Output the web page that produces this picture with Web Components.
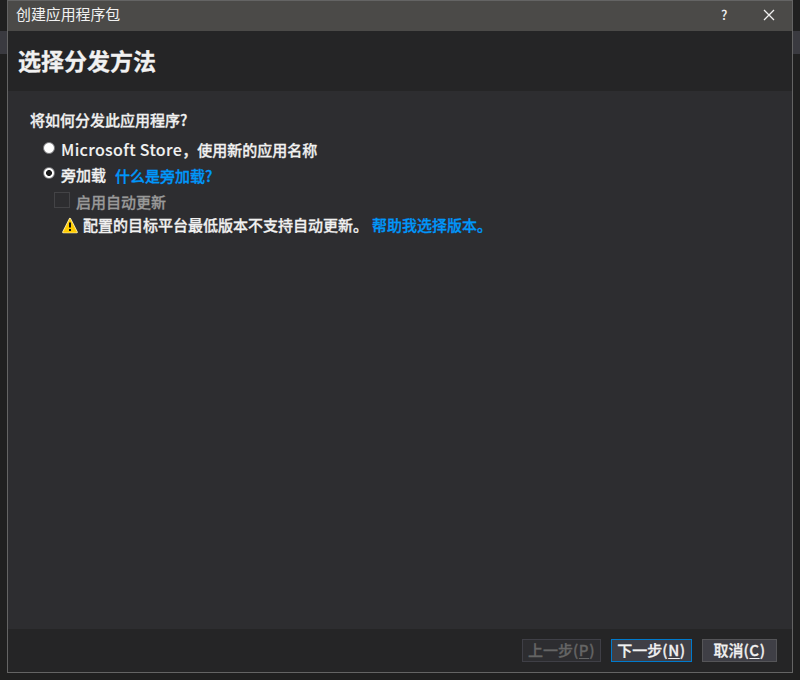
<!DOCTYPE html>
<html lang="zh-CN">
<head>
<meta charset="utf-8">
<title>创建应用程序包</title>
<style>
html, body{
    margin: 0;
    height: 100%;
}
body{
    box-sizing: border-box;
    height: 680px;
    overflow: hidden;
    padding: 0 7px 7px;
    background: linear-gradient(#202020 0 31px, #3a3a40 31px 54px, #202020 54px);
    color: #f1f1f1;
    font: 500 15px/22px "Noto Sans CJK SC", sans-serif;
    -webkit-text-stroke: .3px;
}
</style>
</head>
<body>
<package-dialog>
    <title-bar slot="title">创建应用程序包</title-bar>
    <span slot="heading">选择分发方法</span>
    <distribution-form></distribution-form>
    <dialog-button slot="actions" key="P" disabled style="width:79px">上一步</dialog-button>
    <dialog-button slot="actions" key="N" primary style="width:81px">下一步</dialog-button>
    <dialog-button slot="actions" key="C" style="width:75px">取消</dialog-button>
</package-dialog>

<script>
function define(name, html){
    const template = document.createElement('template');
    template.innerHTML = html;
    window.customElements.define(name, class extends HTMLElement {
        constructor(){
            super();
            this.attachShadow({mode:'open'});
            this.shadowRoot.appendChild(template.content.cloneNode(true));
        }
    });
}

define('title-bar', `
<style>
:host{
    display: flex;
    align-items: center;
    box-sizing: border-box;
    height: 30px;
    padding: 0 17px 2px 8px;
    background: #4b4a48;
    font-size: 14.9px;
    font-weight: 400;
    -webkit-text-stroke: 0;
}
.name{
    flex: 1;
    margin-top: -2px;
}
.help{
    font-size: 13px;
    font-weight: 500;
    width: 7px;
    margin-right: 35px;
}
svg{
    display: block;
}
</style>
<span class="name"><slot></slot></span>
<span class="help">?</span>
<svg width="12" height="12" viewBox="0 0 12 12"><path d="M1 1l10 10M11 1L1 11" stroke="#f1f1f1" stroke-width="1.3"/></svg>
`);

define('package-dialog', `
<style>
:host{
    display: flex;
    flex-direction: column;
    box-sizing: border-box;
    height: 673px;
    border: 1px solid #646464;
    background: #2d2d30;
}
header{
    box-sizing: border-box;
    height: 60px;
    padding: 13px 10px 0;
    background: #252526;
    font-size: 23px;
    font-weight: 700;
    line-height: 32px;
}
main{
    flex: 1;
}
footer{
    display: flex;
    justify-content: flex-end;
    gap: 10px;
    height: 33px;
    padding: 10px 15px 0;
    background: #252526;
}
</style>
<slot name="title"></slot>
<header><slot name="heading"></slot></header>
<main><slot></slot></main>
<footer><slot name="actions"></slot></footer>
`);

define('link-text', `
<style>
:host{
    color: #0097fb;
}
</style>
<slot></slot>
`);

define('radio-option', `
<style>
:host{
    display: flex;
}
i{
    box-sizing: border-box;
    width: 12px;
    height: 12px;
    margin: 1px 6px 0 0;
    border-radius: 50%;
    background: #fff;
    border: 1px solid #77777a;
}
:host([checked]) i{
    background: radial-gradient(circle, #1b1b1c 0 2.6px, #fff 3.3px);
}
</style>
<i></i><slot></slot>
`);

define('check-option', `
<style>
:host{
    display: flex;
    color: #999;
}
i{
    box-sizing: border-box;
    width: 16px;
    height: 16px;
    margin: 1px 6px 0 0;
    border: 1px solid #434346;
}
</style>
<i></i><slot></slot>
`);

define('warning-message', `
<style>
:host{
    display: flex;
}
svg{
    margin: 3px 5px 0 0;
}
</style>
<svg width="16" height="17" viewBox="0 0 16 17">
    <path d="M8 1.8L14.8 15.2H1.2Z" fill="#fc0" stroke="#fff0b0" stroke-width="2" stroke-linejoin="round"/>
    <path d="M8 2.2L14.6 15.2H1.4Z" fill="#fc0" stroke="#fc0" stroke-width=".8" stroke-linejoin="round"/>
    <path d="M7 5.5h2v5H7zM7 12h2v2H7z" fill="#111"/>
</svg>
<slot></slot>
`);

define('distribution-form', `
<style>
:host{
    display: block;
    padding: 18px 22px;
}
radio-option{
    margin-left: 13px;
}
.store{
    margin-top: 10px;
    height: 25px;
}
.store > span{
    margin-top: -3px;
}
.latin{
    font-size: 16px;
    letter-spacing: .35px;
    -webkit-text-stroke: .1px;
}
.side{
    height: 25px;
}
.side span{
    margin-top: -2px;
}
.side link-text{
    margin: -1px 0 0 9px;
}
check-option{
    margin-left: 24px;
    height: 22px;
}
warning-message{
    margin: 1px 0 0 32px;
}
warning-message link-text{
    margin-left: 4px;
}
</style>
<div>将如何分发此应用程序?</div>
<radio-option class="store"><span><span class="latin">Microsoft Store</span>，使用新的应用名称</span></radio-option>
<radio-option class="side" checked><span>旁加载</span><link-text>什么是旁加载?</link-text></radio-option>
<check-option>启用自动更新</check-option>
<warning-message>配置的目标平台最低版本不支持自动更新。<link-text>帮助我选择版本。</link-text></warning-message>
`);

class DialogButton extends HTMLElement {
    constructor(){
        super();
        this.attachShadow({mode:'open'});
        this.shadowRoot.innerHTML = `
<style>
:host{
    display: block;
    box-sizing: border-box;
    height: 23px;
    border: 1px solid #555558;
    background: #3f3f46;
    line-height: 20px;
    text-align: center;
    white-space: nowrap;
}
:host([primary]){
    border-color: #007acc;
}
:host([disabled]){
    border-color: #3f3f46;
    background: #2d2d30;
    color: #656565;
}
.key{
    letter-spacing: .6px;
}
u{
    text-underline-offset: 2px;
    text-decoration-thickness: 1px;
}
</style>
<slot></slot><span class="key">(<u>${this.getAttribute('key')}</u>)</span>`;
    }
}
window.customElements.define('dialog-button', DialogButton);
</script>
</body>
</html>
